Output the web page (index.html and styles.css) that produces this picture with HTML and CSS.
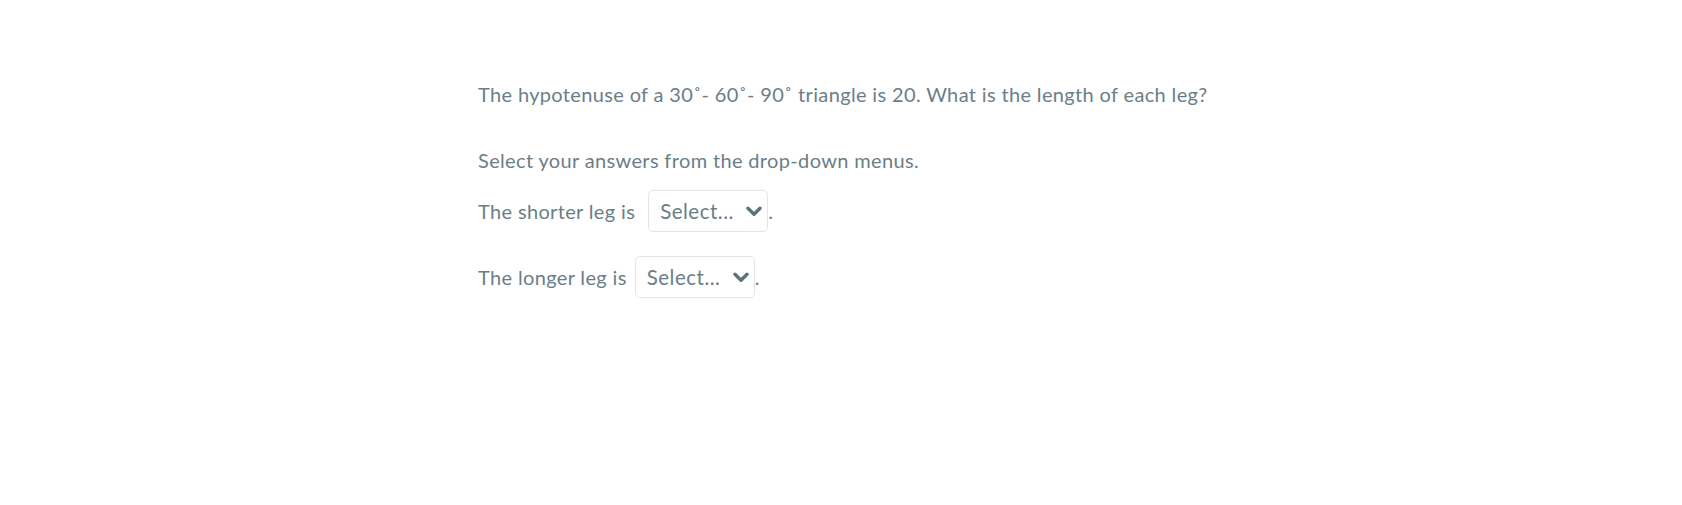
FILE: index.html
```html
<!DOCTYPE html>
<html>
<head>
<meta charset="utf-8">
<link rel="stylesheet" href="styles.css">
</head>
<body>
<div class="m-question">
    <p class="stem">The hypotenuse of a 30&#730;- 60&#730;- 90&#730; triangle is 20. What is the length of each leg?</p>
    <p class="hint">Select your answers from the drop-down menus.</p>
    <p class="row row-short">The shorter leg is
        <span class="dropdown">
            <select>
                <option>Select...</option>
                <option>10</option>
                <option>10√3</option>
                <option>20√3</option>
            </select>
            <svg class="chev" viewBox="0 0 16 11" width="16" height="11"><path d="M2 2.2 L8 8.2 L14 2.2" fill="none" stroke="#5e727b" stroke-width="3.4" stroke-linecap="round" stroke-linejoin="round"/></svg>
        </span>.</p>
    <p class="row row-long">The longer leg is<span class="dropdown">
            <select>
                <option>Select...</option>
                <option>10</option>
                <option>10√3</option>
                <option>20√3</option>
            </select>
            <svg class="chev" viewBox="0 0 16 11" width="16" height="11"><path d="M2 2.2 L8 8.2 L14 2.2" fill="none" stroke="#5e727b" stroke-width="3.4" stroke-linecap="round" stroke-linejoin="round"/></svg>
        </span>.</p>
</div>
</body>
</html>
```

FILE: styles.css
```css
body {margin: 0; background: #fff; color: #6b7e87; font: 20px/30px Lato, "Open Sans", sans-serif; letter-spacing: 0.35px;}
.m-question {width: 726px; margin: 0 auto; padding-top: 79px;}
.m-question p {margin: 0; white-space: nowrap;}
.m-question .hint {margin-top: 36px;}
.m-question .row {display: flex; align-items: center;}
.m-question .row-short {margin-top: 15px;}
.m-question .row-short .dropdown {margin-left: 13px;}
.m-question .row-long {margin-top: 24px;}
.m-question .row-long .dropdown {margin-left: 8px;}
.dropdown {position: relative; display: inline-block; width: 120px; height: 42px;}
.dropdown select {appearance: none; -webkit-appearance: none; box-sizing: border-box; width: 100%; height: 100%; margin: 0; padding: 0 30px 0 11px; border: 1px solid #e2e6e8; border-radius: 5px; background: #fff; color: #6b7e87; font: inherit; font-size: 20.5px; letter-spacing: 0.5px; outline: none;}
.dropdown .chev {position: absolute; right: 6px; top: 16px; pointer-events: none;}
```
